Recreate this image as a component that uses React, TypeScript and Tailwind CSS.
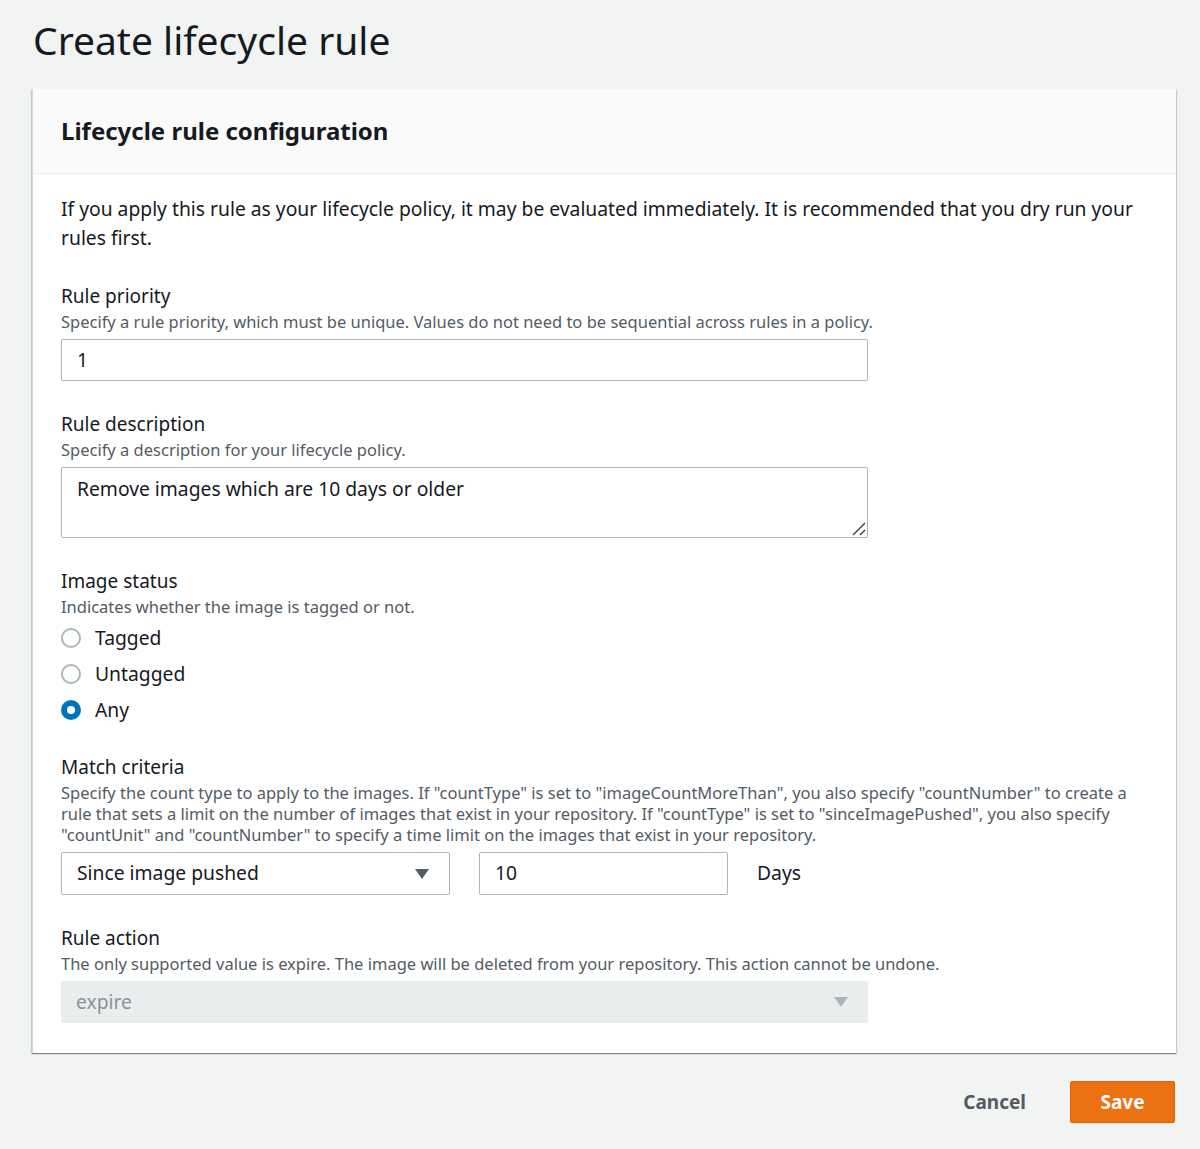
import React from "react";

function Label({ title, desc }: { title: string; desc: string }) {
  return (
    <div className="mb-[7px]">
      <div className="text-[19px] leading-[29px] text-[#16191f]">{title}</div>
      <div className="text-[16.5px] leading-[21px] text-[#545b64]">{desc}</div>
    </div>
  );
}

function Caret({ color }: { color: string }) {
  return (
    <svg width="16" height="12" viewBox="0 0 16 12">
      <path d="M1 1 L15 1 L8 11 Z" fill={color} />
    </svg>
  );
}

function Radio({ label, checked }: { label: string; checked?: boolean }) {
  return (
    <label className="flex items-center h-[36px] gap-[14px]">
      {checked ? (
        <span className="w-[20px] h-[20px] rounded-full bg-[#0073bb] flex items-center justify-center">
          <span className="w-[8px] h-[8px] rounded-full bg-white" />
        </span>
      ) : (
        <span className="w-[20px] h-[20px] rounded-full border-2 border-[#aab7b8] bg-white" />
      )}
      <span className="text-[19.3px] text-[#16191f]">{label}</span>
    </label>
  );
}

export default function App() {
  return (
    <div
      className="min-h-[1149px] bg-[#f2f3f3] px-[32px] pt-[14px] text-[#16191f]"
      style={{ fontFamily: '"Noto Sans", "Open Sans", sans-serif' }}
    >
      <h1 className="text-[39px] leading-[52px] font-normal ml-[1px] mb-[23px]">Create lifecycle rule</h1>

      <div className="w-[1144px] bg-white border-l border-[#d5dbdb] shadow-[0_1px_1px_0_rgba(0,28,36,0.3),1px_1px_1px_0_rgba(0,28,36,0.15),-1px_1px_1px_0_rgba(0,28,36,0.15)]">
        <div className="h-[85px] bg-[#fafafa] border-b border-[#eaeded] px-[28px] flex items-center">
          <h2 className="text-[24px] font-bold text-[#16191f]">Lifecycle rule configuration</h2>
        </div>

        <div className="px-[28px] pt-[20px] pb-[30px]">
          <p className="text-[19.3px] leading-[29px] mb-[30px]">
            If you apply this rule as your lifecycle policy, it may be evaluated immediately. It is recommended that you dry run your rules first.
          </p>

          <Label
            title="Rule priority"
            desc="Specify a rule priority, which must be unique. Values do not need to be sequential across rules in a policy."
          />
          <div className="w-[807px] h-[42px] border border-[#aab7b8] rounded-[2px] px-[15px] flex items-center text-[19.3px]">1</div>

          <div className="mt-[29px]">
            <Label title="Rule description" desc="Specify a description for your lifecycle policy." />
            <div className="relative w-[807px] h-[71px] border border-[#aab7b8] rounded-[2px] px-[15px] pt-[7px] text-[19.3px]">
              Remove images which are 10 days or older
              <svg className="absolute right-[1px] bottom-[1px]" width="16" height="16" viewBox="0 0 16 16">
                <path d="M3 15 L15 3 M10 15 L15 10" stroke="#333" strokeWidth="1.3" fill="none" />
              </svg>
            </div>
          </div>

          <div className="mt-[29px]">
            <Label title="Image status" desc="Indicates whether the image is tagged or not." />
            <div className="-mt-[4px]">
              <Radio label="Tagged" />
              <Radio label="Untagged" />
              <Radio label="Any" checked />
            </div>
          </div>

          <div className="mt-[25px]">
            <Label
              title="Match criteria"
              desc={'Specify the count type to apply to the images. If "countType" is set to "imageCountMoreThan", you also specify "countNumber" to create a rule that sets a limit on the number of images that exist in your repository. If "countType" is set to "sinceImagePushed", you also specify "countUnit" and "countNumber" to specify a time limit on the images that exist in your repository.'}
            />
            <div className="flex items-center gap-[29px]">
              <div className="w-[389px] h-[43px] border border-[#aab7b8] rounded-[2px] pl-[15px] pr-[19px] flex items-center justify-between text-[19.3px]">
                <span>Since image pushed</span>
                <Caret color="#545b64" />
              </div>
              <div className="w-[249px] h-[43px] border border-[#aab7b8] rounded-[2px] px-[15px] flex items-center text-[19.3px]">10</div>
              <span className="text-[19.3px]">Days</span>
            </div>
          </div>

          <div className="mt-[29px]">
            <Label
              title="Rule action"
              desc="The only supported value is expire. The image will be deleted from your repository. This action cannot be undone."
            />
            <div className="w-[807px] h-[42px] bg-[#eaeded] rounded-[2px] pl-[15px] pr-[19px] flex items-center justify-between text-[19.3px] text-[#879596]">
              <span>expire</span>
              <Caret color="#aab7b8" />
            </div>
          </div>
        </div>
      </div>

      <div className="w-[1143px] flex justify-end items-center gap-[44px] mt-[28px]">
        <button className="text-[19px] font-bold text-[#545b64]">Cancel</button>
        <button className="w-[105px] h-[42px] bg-[#ec7211] border border-[#eb5f07] rounded-[2px] text-[19px] font-bold text-white">
          Save
        </button>
      </div>
    </div>
  );
}
